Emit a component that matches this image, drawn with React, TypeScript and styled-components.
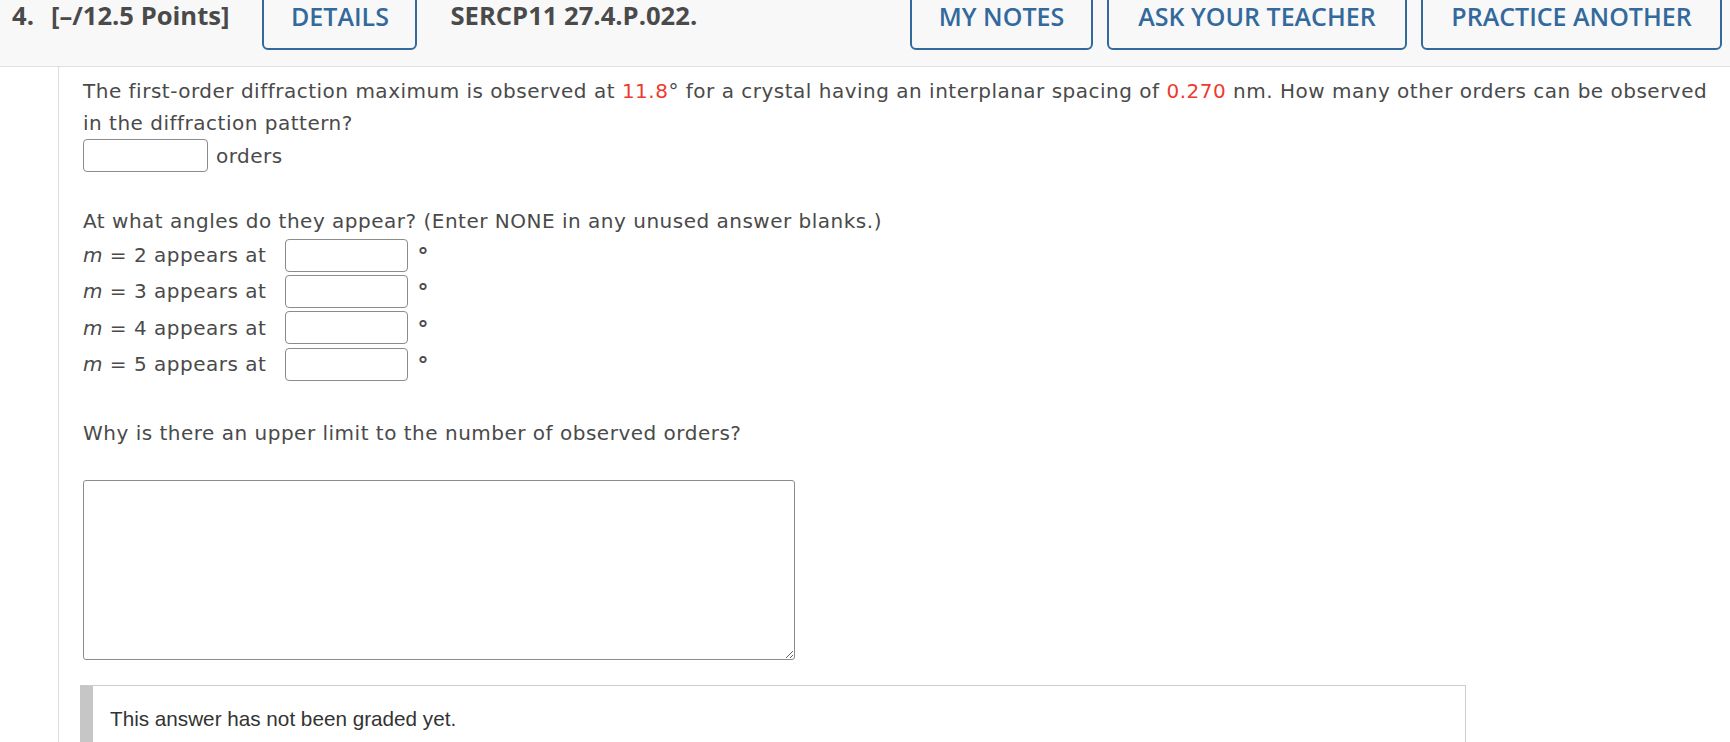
import React from "react";
import styled, { createGlobalStyle } from "styled-components";

const Global = createGlobalStyle`
  html, body { margin: 0; padding: 0; background: #ffffff; }
  body { width: 1730px; overflow: hidden; }
  * { box-sizing: border-box; }
`;

const Page = styled.div`
  width: 1730px;
  height: 742px;
  overflow: hidden;
  display: flex;
  flex-direction: column;
  background: #ffffff;
`;

const Header = styled.header`
  height: 67px;
  flex: none;
  display: flex;
  align-items: flex-start;
  padding: 0 8px 0 12px;
  background: #f8f8f8;
  border-bottom: 1px solid #e0e0e0;
  font-family: "Open Sans", "Liberation Sans", sans-serif;
  font-size: 25.6px;
  line-height: 32px;
`;

const Title = styled.div`
  font-weight: 700;
  color: #4a4a4a;
  white-space: nowrap;
  margin-right: 33px;
`;

const Num = styled.span`
  margin-right: 17px;
`;

const Code = styled.div`
  font-weight: 700;
  color: #4a4a4a;
  white-space: nowrap;
  margin-left: 33px;
`;

const Spacer = styled.div`
  flex: 1;
`;

const Actions = styled.div`
  display: flex;
  gap: 14px;
`;

const HeadButton = styled.button<{ $w: number }>`
  width: ${(p) => p.$w}px;
  margin-top: -2px;
  padding: 0 0 16px;
  background: transparent;
  border: 2px solid #33699c;
  border-radius: 0 0 6px 6px;
  color: #33699c;
  font-family: inherit;
  font-size: 25px;
  line-height: 32px;
  font-weight: 600;
  white-space: nowrap;
  text-align: center;
  cursor: pointer;
`;

const Main = styled.main`
  flex: 1;
  margin-left: 58px;
  border-left: 1px solid #dddddd;
  padding: 8px 15px 0 24px;
  font-family: "DejaVu Sans", Verdana, sans-serif;
  font-size: 20px;
  letter-spacing: 0.5px;
  line-height: 32px;
  color: #4a4a4a;
`;

const Para = styled.p<{ $top?: number }>`
  margin: ${(p) => p.$top ?? 0}px 0 0;
`;

const Red = styled.span`
  color: #ee3b2e;
`;

const Row = styled.div<{ $h: number; $top?: number }>`
  display: flex;
  align-items: center;
  height: ${(p) => p.$h}px;
  margin-top: ${(p) => p.$top ?? 0}px;
`;

const Box = styled.input<{ $w: number }>`
  width: ${(p) => p.$w}px;
  height: 33px;
  border: 1px solid #8c8c8c;
  border-radius: 4px;
  background: #ffffff;
  padding: 0 6px;
  font: inherit;
  outline: none;
`;

const Unit = styled.span`
  margin-left: 8px;
`;

const Degree = styled.span`
  margin-left: 9px;
  font-size: 22px;
  font-weight: 700;
  align-self: flex-start;
  margin-top: 3px;
`;

const Label = styled.span`
  margin-right: 19px;
  white-space: nowrap;
`;

const Var = styled.i`
  font-style: italic;
`;

const AnswerArea = styled.textarea`
  display: block;
  width: 712px;
  height: 180px;
  margin-top: 31px;
  border: 1px solid #8c8c8c;
  border-radius: 3px;
  font: inherit;
  resize: both;
  outline: none;
`;

const Graded = styled.div`
  margin: 25px 0 0 -3px;
  width: 1386px;
  height: 80px;
  border: 1px solid #cccccc;
  border-left: 13px solid #c6c6c6;
  border-bottom: none;
  padding: 21px 0 0 17px;
  font-family: "Liberation Sans", Arial, sans-serif;
  font-size: 20.7px;
  letter-spacing: 0;
  line-height: 24px;
  color: #333333;
`;

const angles = [2, 3, 4, 5];

export default function App() {
  return (
    <Page>
      <Global />
      <Header>
        <Title>
          <Num>4.</Num>[–/12.5 Points]
        </Title>
        <HeadButton $w={155}>DETAILS</HeadButton>
        <Code>SERCP11 27.4.P.022.</Code>
        <Spacer />
        <Actions>
          <HeadButton $w={183}>MY NOTES</HeadButton>
          <HeadButton $w={300}>ASK YOUR TEACHER</HeadButton>
          <HeadButton $w={301}>PRACTICE ANOTHER</HeadButton>
        </Actions>
      </Header>
      <Main>
        <Para>
          The first-order diffraction maximum is observed at <Red>11.8</Red>° for a crystal
          having an interplanar spacing of <Red>0.270</Red> nm. How many other orders can be
          observed in the diffraction pattern?
        </Para>
        <Row $h={33}>
          <Box $w={125} />
          <Unit>orders</Unit>
        </Row>
        <Para $top={33}>At what angles do they appear? (Enter NONE in any unused answer blanks.)</Para>
        {angles.map((m) => (
          <Row key={m} $h={36.3}>
            <Label>
              <Var>m</Var> = {m} appears at
            </Label>
            <Box $w={123} />
            <Degree>°</Degree>
          </Row>
        ))}
        <Para $top={35}>Why is there an upper limit to the number of observed orders?</Para>
        <AnswerArea />
        <Graded>This answer has not been graded yet.</Graded>
      </Main>
    </Page>
  );
}
